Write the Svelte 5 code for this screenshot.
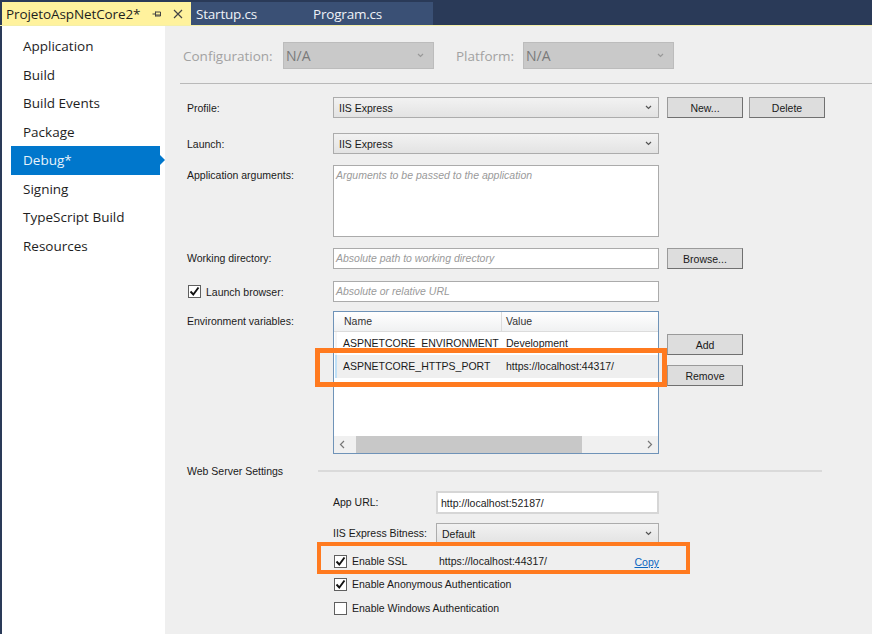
<script lang="ts">
	const pages = ['Application', 'Build', 'Build Events', 'Package', 'Debug*', 'Signing', 'TypeScript Build', 'Resources'];
	const activePage = 'Debug*';
	const envVars = [
		{ name: 'ASPNETCORE_ENVIRONMENT', value: 'Development', selected: false },
		{ name: 'ASPNETCORE_HTTPS_PORT', value: 'https://localhost:44317/', selected: true }
	];
</script>

{#snippet chevron()}
	<svg class="chevron" width="7" height="5" viewBox="0 0 7 5"><path d="M1 1l2.5 2.5L6 1" fill="none" stroke="currentColor" stroke-width="1.2" /></svg>
{/snippet}

{#snippet check(checked: boolean)}
	<span class="check">
		{#if checked}
			<svg width="11" height="11" viewBox="0 0 11 11"><path d="M1.5 5.5l2.8 3L9.5 1.5" fill="none" stroke="#111" stroke-width="1.9" /></svg>
		{/if}
	</span>
{/snippet}

<div class="window">
	<div class="tabbar">
		<div class="tab active">
			<span>ProjetoAspNetCore2*</span>
			<svg class="pin" width="10" height="10" viewBox="0 0 10 10"><path d="M0.5 5H3.5M3.5 2.5V7.5M3.5 3H8.5V7H3.5M3.5 6H8.5" fill="none" stroke="#444" stroke-width="1" /></svg>
			<svg class="close" width="10" height="10" viewBox="0 0 10 10"><path d="M1 1l8 8M9 1l-8 8" fill="none" stroke="#444" stroke-width="1.2" /></svg>
		</div>
		<div class="tabs-rest">
			<span class="tab-startup">Startup.cs</span>
			<span class="tab-program">Program.cs</span>
		</div>
	</div>

	<div class="body">
		<nav class="sidebar">
			{#each pages as page}
				<div class="page" class:active={page === activePage}>{page}</div>
			{/each}
		</nav>

		<main class="content">
			<div class="config-bar">
				<span class="config-label">Configuration:</span>
				<div class="config-combo">N/A {@render chevron()}</div>
				<span class="config-label platform">Platform:</span>
				<div class="config-combo">N/A {@render chevron()}</div>
			</div>

			<div class="form">
				<div class="row profile-row">
					<span class="label">Profile:</span>
					<div class="combo">IIS Express {@render chevron()}</div>
					<button>New...</button>
					<button class="delete">Delete</button>
				</div>
				<div class="row launch-row">
					<span class="label">Launch:</span>
					<div class="combo">IIS Express {@render chevron()}</div>
				</div>
				<div class="row args-row">
					<span class="label">Application arguments:</span>
					<div class="input textarea"><i>Arguments to be passed to the application</i></div>
				</div>
				<div class="row dir-row">
					<span class="label">Working directory:</span>
					<div class="input"><i>Absolute path to working directory</i></div>
					<button>Browse...</button>
				</div>
				<div class="row browser-row">
					<div class="check-label">{@render check(true)}<span>Launch browser:</span></div>
					<div class="input"><i>Absolute or relative URL</i></div>
				</div>
				<div class="row env-row">
					<span class="label">Environment variables:</span>
					<div class="table">
						<div class="thead">
							<span class="col-name">Name</span>
							<span class="col-value">Value</span>
						</div>
						<div class="tbody">
							{#each envVars as env}
								<div class="tr" class:selected={env.selected}>
									<span class="col-name">{env.name}</span>
									<span class="col-value">{env.value}</span>
								</div>
							{/each}
						</div>
						<div class="hscroll">
							<svg width="6" height="9" viewBox="0 0 6 9"><path d="M5 1L1.5 4.5 5 8" fill="none" stroke="#777" stroke-width="1.2" /></svg>
							<div class="thumb"></div>
							<svg width="6" height="9" viewBox="0 0 6 9"><path d="M1 1l3.5 3.5L1 8" fill="none" stroke="#777" stroke-width="1.2" /></svg>
						</div>
					</div>
					<div class="env-actions">
						<button>Add</button>
						<button>Remove</button>
					</div>
				</div>

				<div class="section-head">
					<span>Web Server Settings</span>
					<div class="section-line"></div>
				</div>

				<div class="server">
					<div class="server-row url-row">
						<span class="label">App URL:</span>
						<div class="input url">http://localhost:52187/</div>
					</div>
					<div class="server-row bitness-row">
						<span class="label">IIS Express Bitness:</span>
						<div class="combo">Default {@render chevron()}</div>
					</div>
					<div class="ssl-row">
						<div class="check-label">{@render check(true)}<span>Enable SSL</span></div>
						<span class="ssl-url">https://localhost:44317/</span>
						<a href="#copy">Copy</a>
					</div>
					<div class="check-label auth">{@render check(true)}<span>Enable Anonymous Authentication</span></div>
					<div class="check-label auth windows">{@render check(false)}<span>Enable Windows Authentication</span></div>
				</div>
			</div>

			<div class="callout env-callout"></div>
			<div class="callout ssl-callout"></div>
		</main>
	</div>
</div>

<style>
	:global(body) {
		margin: 0;
		background: #2a3a58;
	}

	.window {
		width: 872px;
		height: 634px;
		overflow: hidden;
		display: flex;
		flex-direction: column;
		background: #2a3a58;
		font-family: "Liberation Sans", Arial, sans-serif;
		font-size: 10.5px;
		color: #1a1a1a;
	}

	.tabbar {
		height: 26px;
		flex: none;
		display: flex;
		align-items: flex-end;
		padding: 2px 0 0 2px;
		box-sizing: border-box;
		font-family: "Open Sans", sans-serif;
		font-size: 13.5px;
		border-bottom: 1px solid #f4efa8;
	}

	.tab {
		display: flex;
		align-items: center;
		height: 23px;
	}

	.tab.active {
		width: 189px;
		padding-left: 4px;
		box-sizing: border-box;
		background: #fff29d;
		color: #1e1e1e;
		letter-spacing: -0.1px;
	}

	.pin {
		margin-left: 12px;
	}

	.close {
		margin-left: 11px;
	}

	.tabs-rest {
		display: flex;
		align-items: center;
		width: 242px;
		height: 23px;
		background: #3a5075;
		color: #eef2f8;
		letter-spacing: -0.2px;
	}

	.tab-startup {
		margin-left: 5px;
	}

	.tab-program {
		margin-left: 56px;
	}

	.body {
		flex: 1;
		display: flex;
		padding-left: 2px;
		min-height: 0;
	}

	.sidebar {
		width: 163px;
		flex: none;
		box-sizing: border-box;
		padding-top: 6px;
		background: #fff;
		font-family: "Open Sans", sans-serif;
		font-size: 13.5px;
		color: #1e1e1e;
	}

	.page {
		position: relative;
		height: 28.5px;
		line-height: 28px;
		margin: 0 5px 0 9px;
		padding-left: 12px;
	}

	.page.active {
		background: #0077cc;
		color: #e8f3fb;
	}

	.page.active::after {
		content: '';
		position: absolute;
		left: 100%;
		top: 9px;
		border-left: 5px solid #0077cc;
		border-top: 5px solid transparent;
		border-bottom: 5px solid transparent;
	}

	.content {
		position: relative;
		flex: 1;
		background: #efefef;
		min-width: 0;
	}

	.config-bar {
		display: flex;
		align-items: center;
		height: 58px;
		margin-left: 15px;
		padding-left: 3px;
		box-sizing: border-box;
		border-bottom: 1px solid #b9b9b9;
		font-family: "Open Sans", sans-serif;
		font-size: 13.5px;
	}

	.config-label {
		width: 100px;
		margin-top: 2px;
		color: #a2a2a2;
	}

	.config-label.platform {
		width: 67px;
		margin-left: 22px;
	}

	.config-combo {
		display: flex;
		align-items: center;
		justify-content: space-between;
		width: 151px;
		height: 27px;
		padding: 0 2px;
		margin-top: 2px;
		box-sizing: border-box;
		background: #c9c9c9;
		border: 1px solid #bcbcbc;
		color: #7a7a7a;
		font-size: 14px;
	}

	.config-combo .chevron {
		color: #999;
		margin-right: 7px;
	}

	.form {
		padding: 13px 0 0 22px;
	}

	.row {
		display: grid;
		grid-template-columns: 146px 326px 84px 82px;
		align-items: start;
	}

	.row > button {
		margin-left: 8px;
		width: 76px;
		height: 21px;
	}

	.row > button.delete {
		margin-left: 6px;
	}

	.label {
		line-height: 21px;
	}

	.profile-row .label,
	.launch-row .label {
		height: 21px;
		line-height: 23px;
	}

	.launch-row {
		margin-top: 15px;
	}

	.args-row {
		margin-top: 11px;
	}

	.dir-row {
		margin-top: 11px;
	}

	.browser-row {
		margin-top: 12px;
	}

	.env-row {
		margin-top: 9px;
	}

	.combo {
		display: flex;
		align-items: center;
		justify-content: space-between;
		height: 21px;
		padding: 0 6px 0 5px;
		box-sizing: border-box;
		background: linear-gradient(#f2f2f2, #e3e3e3);
		border: 1px solid #acacac;
	}

	.combo .chevron {
		color: #555;
	}

	.input {
		height: 21px;
		line-height: 19px;
		padding-left: 2px;
		box-sizing: border-box;
		background: #fff;
		border: 1px solid #ababab;
	}

	.input i {
		color: #9a9a9a;
	}

	.textarea {
		height: 72px;
	}

	button {
		padding: 0;
		background: #dddddd;
		border: 1px solid #707070;
		border-color: #9a9a9a #707070 #707070 #9a9a9a;
		font: inherit;
		color: #1a1a1a;
	}

	.check-label {
		display: flex;
		align-items: center;
		gap: 5px;
		white-space: nowrap;
	}

	.browser-row .check-label {
		height: 21px;
		padding-left: 1px;
	}

	.check {
		display: flex;
		align-items: center;
		justify-content: center;
		width: 13px;
		height: 13px;
		box-sizing: border-box;
		background: #fff;
		border: 1px solid #5f5f5f;
	}

	.table {
		height: 143px;
		box-sizing: border-box;
		display: flex;
		flex-direction: column;
		background: #fff;
		border: 1px solid #6f93b8;
	}

	.thead {
		display: flex;
		height: 19px;
		flex: none;
		line-height: 19px;
		padding-left: 6px;
		background: linear-gradient(#fff, #f0f1f2);
		border-bottom: 1px solid #dcdcdc;
		color: #333;
	}

	.thead .col-name {
		width: 162px;
		padding-left: 4px;
		box-sizing: border-box;
		border-right: 1px solid #dcdcdc;
	}

	.thead .col-value {
		padding-left: 4px;
	}

	.tbody {
		flex: 1;
	}

	.tr {
		display: flex;
		height: 23px;
		line-height: 23px;
		margin-left: 1px;
		padding-left: 6px;
		white-space: nowrap;
		border-left: 2px solid #f4f4f4;
	}

	.tr.selected {
		background: #efefef;
		border-left-color: #bfe0f7;
	}

	.tr .col-name {
		width: 163px;
	}

	.hscroll {
		flex: none;
		display: flex;
		align-items: center;
		height: 17px;
		padding: 0 5px;
		background: #f0f0f0;
	}

	.thumb {
		width: 226px;
		height: 17px;
		margin: 0 auto 0 11px;
		background: #c8c8c8;
	}

	.env-actions {
		display: flex;
		flex-direction: column;
		gap: 10px;
		padding: 23px 0 0 8px;
	}

	.env-actions button {
		width: 76px;
		height: 21px;
	}

	.section-head {
		display: flex;
		align-items: center;
		margin-top: 9px;
		height: 16px;
		white-space: nowrap;
	}

	.section-head span {
		flex: none;
		width: 131px;
	}

	.section-line {
		width: 504px;
		height: 2px;
		background: #dadada;
	}

	.server {
		padding-left: 146px;
		margin-top: 12px;
	}

	.server-row {
		display: grid;
		grid-template-columns: 103px 223px;
		align-items: center;
	}

	.url-row .url {
		height: 23px;
		line-height: 21px;
		padding-left: 3px;
		border: 2px solid #d6d6d6;
		color: #222;
	}

	.bitness-row {
		margin-top: 9px;
	}

	.ssl-row {
		display: flex;
		align-items: center;
		width: 326px;
		height: 20px;
		margin-top: 7px;
		padding-left: 1px;
		box-sizing: border-box;
		white-space: nowrap;
	}

	.ssl-row .check-label {
		width: 105px;
		flex: none;
	}

	.ssl-url {
		flex: 1;
	}

	.ssl-row a {
		color: #0a66c2;
		padding-top: 2px;
	}

	.auth {
		margin: 4px 0 0 1px;
		height: 18px;
	}

	.auth.windows {
		margin-top: 6px;
	}

	.callout {
		position: absolute;
		box-sizing: border-box;
		border-style: solid;
		border-color: #ff7a1f;
		pointer-events: none;
	}

	.env-callout {
		left: 150px;
		top: 322px;
		width: 352px;
		height: 39px;
		border-width: 5px;
	}

	.ssl-callout {
		left: 152px;
		top: 516px;
		width: 373px;
		height: 32px;
		border-width: 4px;
	}
</style>
